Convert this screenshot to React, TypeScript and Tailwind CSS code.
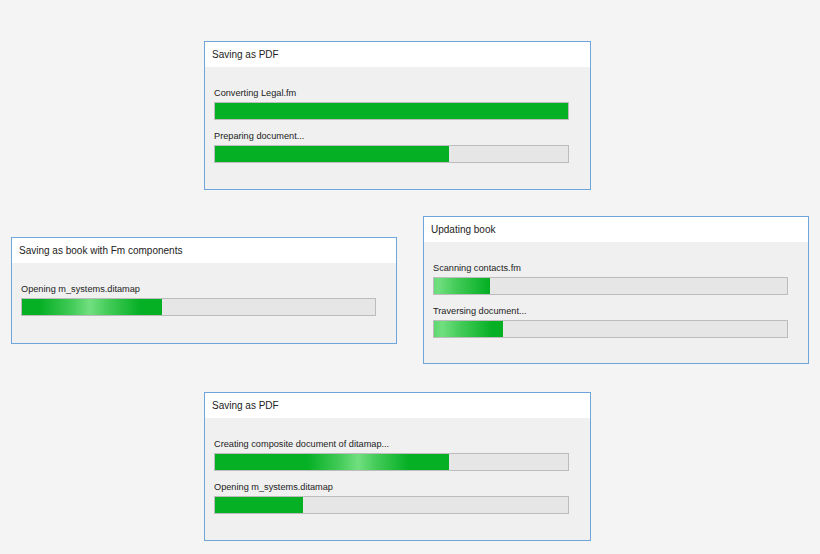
import React from "react";

type Bar = { label: string; pct: number; glow?: number };
type Win = { title: string; x: number; y: number; w: number; h: number; bars: Bar[] };

const wins: Win[] = [
  {
    title: "Saving as PDF",
    x: 204,
    y: 41,
    w: 387,
    h: 149,
    bars: [
      { label: "Converting Legal.fm", pct: 100 },
      { label: "Preparing document...", pct: 66.2 },
    ],
  },
  {
    title: "Saving as book with Fm components",
    x: 11,
    y: 237,
    w: 386,
    h: 107,
    bars: [{ label: "Opening m_systems.ditamap", pct: 39.7, glow: 68 }],
  },
  {
    title: "Updating book",
    x: 423,
    y: 216,
    w: 386,
    h: 148,
    bars: [
      { label: "Scanning contacts.fm", pct: 15.8, glow: 4 },
      { label: "Traversing document...", pct: 19.5, glow: 8 },
    ],
  },
  {
    title: "Saving as PDF",
    x: 204,
    y: 392,
    w: 387,
    h: 149,
    bars: [
      { label: "Creating composite document of ditamap...", pct: 66.2, glow: 143 },
      { label: "Opening m_systems.ditamap", pct: 24.8 },
    ],
  },
];

function Progress({ bar }: { bar: Bar }) {
  const glowStyle: React.CSSProperties = {};
  if (bar.glow !== undefined) {
    const c = bar.glow;
    glowStyle.backgroundImage = `linear-gradient(90deg, rgba(130,230,140,0) ${c - 50}px, rgba(130,230,140,0.5) ${c - 18}px, rgba(140,235,150,0.8) ${c}px, rgba(130,230,140,0.5) ${c + 18}px, rgba(130,230,140,0) ${c + 50}px)`;
  }
  return (
    <div className="flex flex-col">
      <div className="h-[12px] text-[9.2px] leading-[12px] text-[#222] whitespace-nowrap">{bar.label}</div>
      <div className="mt-[3px] h-[18px] w-[355px] border border-[#bcbcbc] bg-[#e6e6e6] flex">
        <div className="h-full bg-[#06b025]" style={{ width: `${bar.pct}%`, ...glowStyle }} />
      </div>
    </div>
  );
}

function Window({ win }: { win: Win }) {
  return (
    <div
      className="absolute flex flex-col border border-[#6ea6dc] bg-[#f0f0f0]"
      style={{ left: win.x, top: win.y, width: win.w, height: win.h }}
    >
      <div className="h-[25px] bg-white flex items-center pl-[7px] text-[10px] text-[#222]">
        {win.title}
      </div>
      <div className="flex flex-col gap-[10px] pt-[20px] pl-[9px]">
        {win.bars.map((b, i) => (
          <Progress key={i} bar={b} />
        ))}
      </div>
    </div>
  );
}

export default function App() {
  return (
    <div
      className="relative w-[820px] h-[554px] bg-[#f4f4f4] overflow-hidden"
      style={{ fontFamily: '"Liberation Sans", Arial, sans-serif' }}
    >
      {wins.map((w, i) => (
        <Window key={i} win={w} />
      ))}
    </div>
  );
}
